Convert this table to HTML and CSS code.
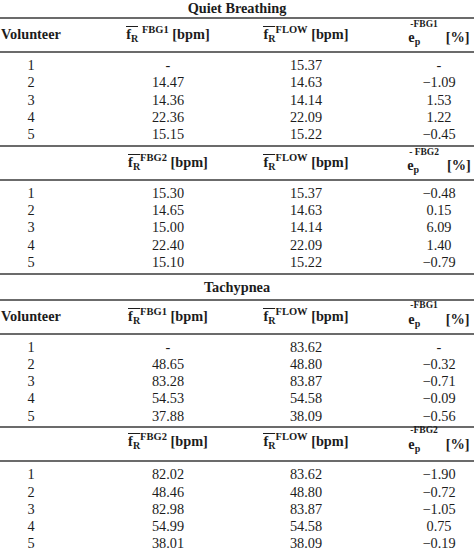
FILE: index.html
```html
<!DOCTYPE html>
<html lang="en">
<head>
<meta charset="utf-8">
<title>Respiratory frequency table</title>
<link rel="stylesheet" href="styles.css">
</head>
<body>
<div class="tbl">
  <div class="title t1">Quiet Breathing</div>

  <div class="row head">
    <div class="c1">Volunteer</div>
    <div class="c2"><span class="ov">f<sub>R</sub></span> <sup>FBG1</sup> [bpm]</div>
    <div class="c3"><span class="ov">f<sub>R</sub></span><sup>FLOW</sup> [bpm]</div>
    <div class="c4"><span class="ep"><span class="ep-sup">-FBG1</span><span class="ep-base">e<sub>p</sub></span></span><span class="pct">[%]</span></div>
  </div>
  <div class="body">
    <div class="row"><div class="c1">1</div><div class="c2">-</div><div class="c3">15.37</div><div class="c4">-</div></div>
    <div class="row"><div class="c1">2</div><div class="c2">14.47</div><div class="c3">14.63</div><div class="c4">−1.09</div></div>
    <div class="row"><div class="c1">3</div><div class="c2">14.36</div><div class="c3">14.14</div><div class="c4">1.53</div></div>
    <div class="row"><div class="c1">4</div><div class="c2">22.36</div><div class="c3">22.09</div><div class="c4">1.22</div></div>
    <div class="row"><div class="c1">5</div><div class="c2">15.15</div><div class="c3">15.22</div><div class="c4">−0.45</div></div>
  </div>

  <div class="row head">
    <div class="c1"></div>
    <div class="c2"><span class="ov">f<sub>R</sub></span><sup>FBG2</sup> [bpm]</div>
    <div class="c3"><span class="ov">f<sub>R</sub></span><sup>FLOW</sup> [bpm]</div>
    <div class="c4"><span class="ep"><span class="ep-sup">- FBG2</span><span class="ep-base">e<sub>p</sub></span></span><span class="pct">[%]</span></div>
  </div>
  <div class="body">
    <div class="row"><div class="c1">1</div><div class="c2">15.30</div><div class="c3">15.37</div><div class="c4">−0.48</div></div>
    <div class="row"><div class="c1">2</div><div class="c2">14.65</div><div class="c3">14.63</div><div class="c4">0.15</div></div>
    <div class="row"><div class="c1">3</div><div class="c2">15.00</div><div class="c3">14.14</div><div class="c4">6.09</div></div>
    <div class="row"><div class="c1">4</div><div class="c2">22.40</div><div class="c3">22.09</div><div class="c4">1.40</div></div>
    <div class="row"><div class="c1">5</div><div class="c2">15.10</div><div class="c3">15.22</div><div class="c4">−0.79</div></div>
  </div>

  <div class="title t2">Tachypnea</div>

  <div class="row head">
    <div class="c1">Volunteer</div>
    <div class="c2"><span class="ov">f<sub>R</sub></span><sup>FBG1</sup> [bpm]</div>
    <div class="c3"><span class="ov">f<sub>R</sub></span><sup>FLOW</sup> [bpm]</div>
    <div class="c4"><span class="ep"><span class="ep-sup">-FBG1</span><span class="ep-base">e<sub>p</sub></span></span><span class="pct">[%]</span></div>
  </div>
  <div class="body">
    <div class="row"><div class="c1">1</div><div class="c2">-</div><div class="c3">83.62</div><div class="c4">-</div></div>
    <div class="row"><div class="c1">2</div><div class="c2">48.65</div><div class="c3">48.80</div><div class="c4">−0.32</div></div>
    <div class="row"><div class="c1">3</div><div class="c2">83.28</div><div class="c3">83.87</div><div class="c4">−0.71</div></div>
    <div class="row"><div class="c1">4</div><div class="c2">54.53</div><div class="c3">54.58</div><div class="c4">−0.09</div></div>
    <div class="row"><div class="c1">5</div><div class="c2">37.88</div><div class="c3">38.09</div><div class="c4">−0.56</div></div>
  </div>

  <div class="row head head-tight">
    <div class="c1"></div>
    <div class="c2"><span class="ov">f<sub>R</sub></span><sup>FBG2</sup> [bpm]</div>
    <div class="c3"><span class="ov">f<sub>R</sub></span><sup>FLOW</sup> [bpm]</div>
    <div class="c4"><span class="ep"><span class="ep-sup">-FBG2</span><span class="ep-base">e<sub>p</sub></span></span><span class="pct">[%]</span></div>
  </div>
  <div class="body last">
    <div class="row"><div class="c1">1</div><div class="c2">82.02</div><div class="c3">83.62</div><div class="c4">−1.90</div></div>
    <div class="row"><div class="c1">2</div><div class="c2">48.46</div><div class="c3">48.80</div><div class="c4">−0.72</div></div>
    <div class="row"><div class="c1">3</div><div class="c2">82.98</div><div class="c3">83.87</div><div class="c4">−1.05</div></div>
    <div class="row"><div class="c1">4</div><div class="c2">54.99</div><div class="c3">54.58</div><div class="c4">0.75</div></div>
    <div class="row"><div class="c1">5</div><div class="c2">38.01</div><div class="c3">38.09</div><div class="c4">−0.19</div></div>
  </div>
</div>
</body>
</html>
```

FILE: styles.css
```css
html, body {
  margin: 0;
  padding: 0;
  background: #ffffff;
}

body {
  color: #1c1c1c;
  font-family: "Liberation Serif", "Times New Roman", serif;
  font-size: 14.3px;
}

.tbl {
  width: 474px;
}

.title {
  text-align: center;
  font-weight: bold;
  border-bottom: 2px solid #6b6b6b;
}

.title.t1 {
  line-height: 17px;
}

.title.t2 {
  line-height: 24px;
}

.row {
  display: grid;
  grid-template-columns: 100px 136px 168px 70px;
  white-space: nowrap;
}

.c1 {
  padding-right: 38px;
  text-align: center;
}

.c2 {
  text-align: center;
}

.c3 {
  padding-right: 28px;
  text-align: center;
}

.c4 {
  text-align: center;
}

.head {
  box-sizing: border-box;
  height: 34px;
  padding-top: 3.8px;
  border-bottom: 2px solid #6b6b6b;
  align-items: baseline;
  font-weight: bold;
  line-height: 18px;
}

.head.head-tight {
  padding-top: 1px;
}

.head sup,
.head sub {
  font-size: 10.5px;
  line-height: 0;
}

.head sup {
  vertical-align: 6px;
}

.head sub {
  font-size: 10px;
  vertical-align: -3px;
}

.ov {
  display: inline-block;
  line-height: 15px;
  border-top: 1px solid #1c1c1c;
}

.ep {
  display: inline-block;
  margin-top: -4px;
  text-align: left;
  vertical-align: -2.8px;
}

.ep-sup {
  display: block;
  padding-left: 2px;
  font-size: 9.5px;
  line-height: 10.4px;
}

.ep-base {
  display: block;
  line-height: 16px;
}

.pct {
  margin-left: 8px;
  vertical-align: -2.8px;
}

.body {
  padding: 4px 0 1.5px;
  border-bottom: 2px solid #6b6b6b;
}

.body .row {
  line-height: 17.25px;
}
```
